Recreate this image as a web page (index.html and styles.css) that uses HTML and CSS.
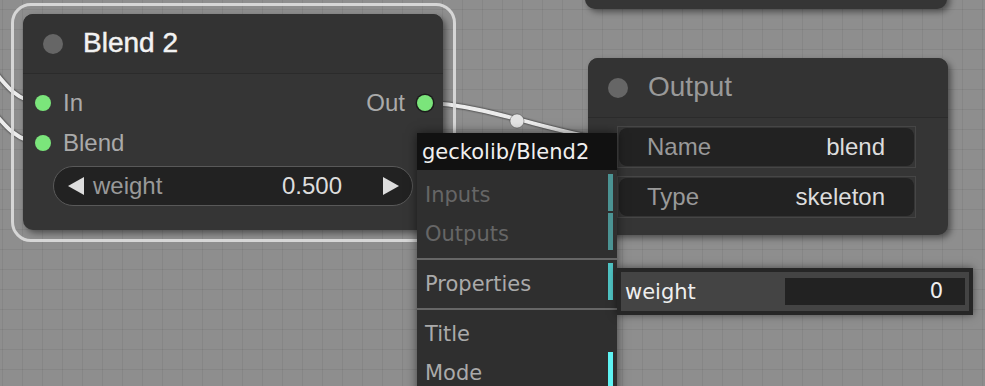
FILE: index.html
```html
<!DOCTYPE html>
<html lang="en">
<head>
    <meta charset="UTF-8">
    <meta name="viewport" content="width=device-width, initial-scale=1.0">
    <title>Graph Editor</title>
    <link rel="stylesheet" href="styles.css">
</head>
<body>

<div class="canvas">
    <svg class="wires" width="985" height="386" viewBox="0 0 985 386">
        <g class="link">
            <path d="M -60 26 C -10 36, -5 103, 43 103"/>
            <path d="M -60 70 C -10 80, -5 143, 43 143"/>
            <path d="M 425 103 C 480 103, 560 135, 610 140"/>
        </g>
        <circle class="link-dot" cx="517" cy="121" r="7"/>
    </svg>

    <div class="node node-top"></div>

    <div class="node blend selected">
        <div class="node-title">
            <span class="title-dot"></span>
            <span class="title-text">Blend 2</span>
        </div>
        <div class="node-body">
            <div class="slot-row">
                <div class="slot slot-in"><span class="dot"></span>In</div>
                <div class="slot slot-out">Out<span class="dot"></span></div>
            </div>
            <div class="slot-row">
                <div class="slot slot-in"><span class="dot"></span>Blend</div>
            </div>
            <div class="number-widget">
                <svg class="arrow" width="18" height="18" viewBox="0 0 18 18"><polygon points="17,0 17,18 1,9"/></svg>
                <span class="widget-name">weight</span>
                <span class="widget-value">0.500</span>
                <svg class="arrow" width="18" height="18" viewBox="0 0 18 18"><polygon points="1,0 1,18 17,9"/></svg>
            </div>
        </div>
    </div>

    <div class="node output">
        <div class="node-title">
            <span class="title-dot"></span>
            <span class="title-text">Output</span>
        </div>
        <div class="node-body">
            <div class="text-widget">
                <div class="text-widget-inner"><span class="widget-name">Name</span><span class="widget-value">blend</span></div>
            </div>
            <div class="text-widget">
                <div class="text-widget-inner"><span class="widget-name">Type</span><span class="widget-value">skeleton</span></div>
            </div>
        </div>
    </div>

    <div class="menu">
        <div class="menu-title">geckolib/Blend2</div>
        <div class="menu-entries">
            <div class="menu-entry submenu disabled">Inputs</div>
            <div class="menu-entry submenu disabled">Outputs</div>
            <div class="menu-separator"></div>
            <div class="menu-entry submenu active">Properties</div>
            <div class="menu-separator"></div>
            <div class="menu-entry">Title</div>
            <div class="menu-entry submenu bright">Mode</div>
        </div>
    </div>

    <div class="property-panel">
        <span class="property-name">weight</span>
        <div class="property-value">0</div>
    </div>
</div>

</body>
</html>
```

FILE: styles.css
```css
body {
    margin: 0;
    background-color: #8e8e8e;
    font-family: "Liberation Sans", Arial, sans-serif;
    overflow: hidden;
}
.canvas {
    position: relative;
    width: 985px;
    height: 386px;
    overflow: hidden;
    background-color: #8e8e8e;
    background-image:
        linear-gradient(to right, rgba(0, 0, 0, 0.06) 1px, transparent 1px),
        linear-gradient(to bottom, rgba(0, 0, 0, 0.06) 1px, transparent 1px);
    background-size: 20px 20px;
    background-position: 2px 9px;
}
.wires {
    position: absolute;
    left: 0;
    top: 0;
}
.link path {
    fill: none;
    stroke: #ececec;
    stroke-width: 4;
    filter: drop-shadow(0 0 1px rgba(0, 0, 0, 0.85));
}
.link-dot {
    fill: #e4e4e4;
    stroke: rgba(0, 0, 0, 0.3);
    stroke-width: 1;
}

/* nodes */
.node {
    position: absolute;
    background: #353535;
    border-radius: 10px;
    box-shadow: 3px 3px 6px rgba(0, 0, 0, 0.45);
    color: #aaa;
}
.node-top {
    left: 585px;
    top: -60px;
    width: 362px;
    height: 69px;
}
.blend {
    left: 23px;
    top: 14px;
    width: 420px;
    height: 216px;
}
.output {
    left: 588px;
    top: 58px;
    width: 360px;
    height: 177px;
}
.selected::before {
    content: "";
    position: absolute;
    left: -12px;
    top: -11px;
    right: -13px;
    bottom: -12px;
    border: 3px solid rgba(222, 222, 222, 0.9);
    border-radius: 20px;
    filter: blur(0.4px);
}
.node-title {
    height: 59px;
    display: flex;
    align-items: center;
    gap: 20px;
    padding-left: 20px;
    border-bottom: 1px solid #2b2b2b;
    border-radius: 10px 10px 0 0;
    background: #333;
}
.title-dot {
    width: 20px;
    height: 20px;
    border-radius: 50%;
    background: #666;
}
.title-text {
    font-size: 28px;
    color: #999;
    margin-top: -2px;
}
.selected .title-text {
    color: #f2f2f2;
    -webkit-text-stroke: 0.5px #f2f2f2;
}

/* slots */
.blend .node-body {
    padding-top: 9px;
}
.slot-row {
    height: 40px;
    display: flex;
    justify-content: space-between;
    align-items: center;
    padding: 0 10px 0 12px;
}
.slot {
    display: flex;
    align-items: center;
    gap: 12px;
    font-size: 24px;
    color: #aaa;
}
.dot {
    width: 16px;
    height: 16px;
    border-radius: 50%;
    background: #7be57b;
}
.slot-out .dot {
    box-shadow: 0 0 0 1.5px #1c1c1c;
}

/* number widget */
.number-widget {
    margin: 3px 30px 0;
    height: 38px;
    border: 1px solid #595959;
    border-radius: 20px;
    background: #222;
    display: flex;
    align-items: center;
    padding: 0 12px 0 13px;
    font-size: 24px;
}
.arrow {
    fill: #ddd;
}
.number-widget .widget-name {
    flex: 1;
    margin-left: 8px;
    color: #999;
}
.number-widget .widget-value {
    margin-right: 40px;
    color: #ddd;
}

/* text widgets */
.output .node-body {
    padding: 8px 32px 0 29px;
    display: flex;
    flex-direction: column;
    gap: 8px;
}
.text-widget {
    height: 38px;
    border: 1px solid #464646;
    padding: 1px;
}
.text-widget-inner {
    height: 100%;
    background: #222;
    border-radius: 8px;
    display: flex;
    align-items: center;
    justify-content: space-between;
    padding: 0 29px 0 28px;
    font-size: 24px;
}
.text-widget .widget-name {
    color: #999;
}
.text-widget .widget-value {
    color: #ddd;
}

/* context menu */
.menu {
    position: absolute;
    left: 417px;
    top: 133px;
    width: 200px;
    height: 270px;
    background: #2f2f2f;
    box-shadow: 0 0 10px rgba(0, 0, 0, 0.55);
    font-family: "DejaVu Sans", Tahoma, sans-serif;
    font-size: 21px;
}
.menu-title {
    height: 37px;
    line-height: 38px;
    background: #111;
    color: #f0f0f0;
    padding-left: 5px;
}
.menu-entries {
    display: flex;
    flex-direction: column;
    padding: 4px 4px 0 0;
}
.menu-entry {
    height: 37px;
    line-height: 43px;
    margin-bottom: 2px;
    padding-left: 8px;
    color: #aaa;
    border-right: 5px solid transparent;
}
.menu-entry.disabled {
    color: #666;
}
.menu-entry.submenu {
    border-right-color: #4b9393;
}
.menu-entry.active {
    border-right-color: #4fc3c3;
}
.menu-entry.bright {
    border-right-color: #5ef3f3;
}
.menu-separator {
    height: 2px;
    margin: 6px -4px 3px 0;
    background: #666;
}

/* property submenu */
.property-panel {
    position: absolute;
    left: 617px;
    top: 268px;
    width: 348px;
    height: 39px;
    border: 4px solid #262626;
    background: #444;
    box-shadow: 0 0 8px rgba(0, 0, 0, 0.5);
    display: flex;
    align-items: center;
    font-family: "DejaVu Sans", Tahoma, sans-serif;
    font-size: 21px;
    color: #eee;
}
.property-name {
    padding-left: 4px;
}
.property-value {
    margin-left: auto;
    margin-right: 4px;
    width: 158px;
    height: 27px;
    line-height: 27px;
    background: #222;
    text-align: right;
    padding-right: 22px;
}
```
